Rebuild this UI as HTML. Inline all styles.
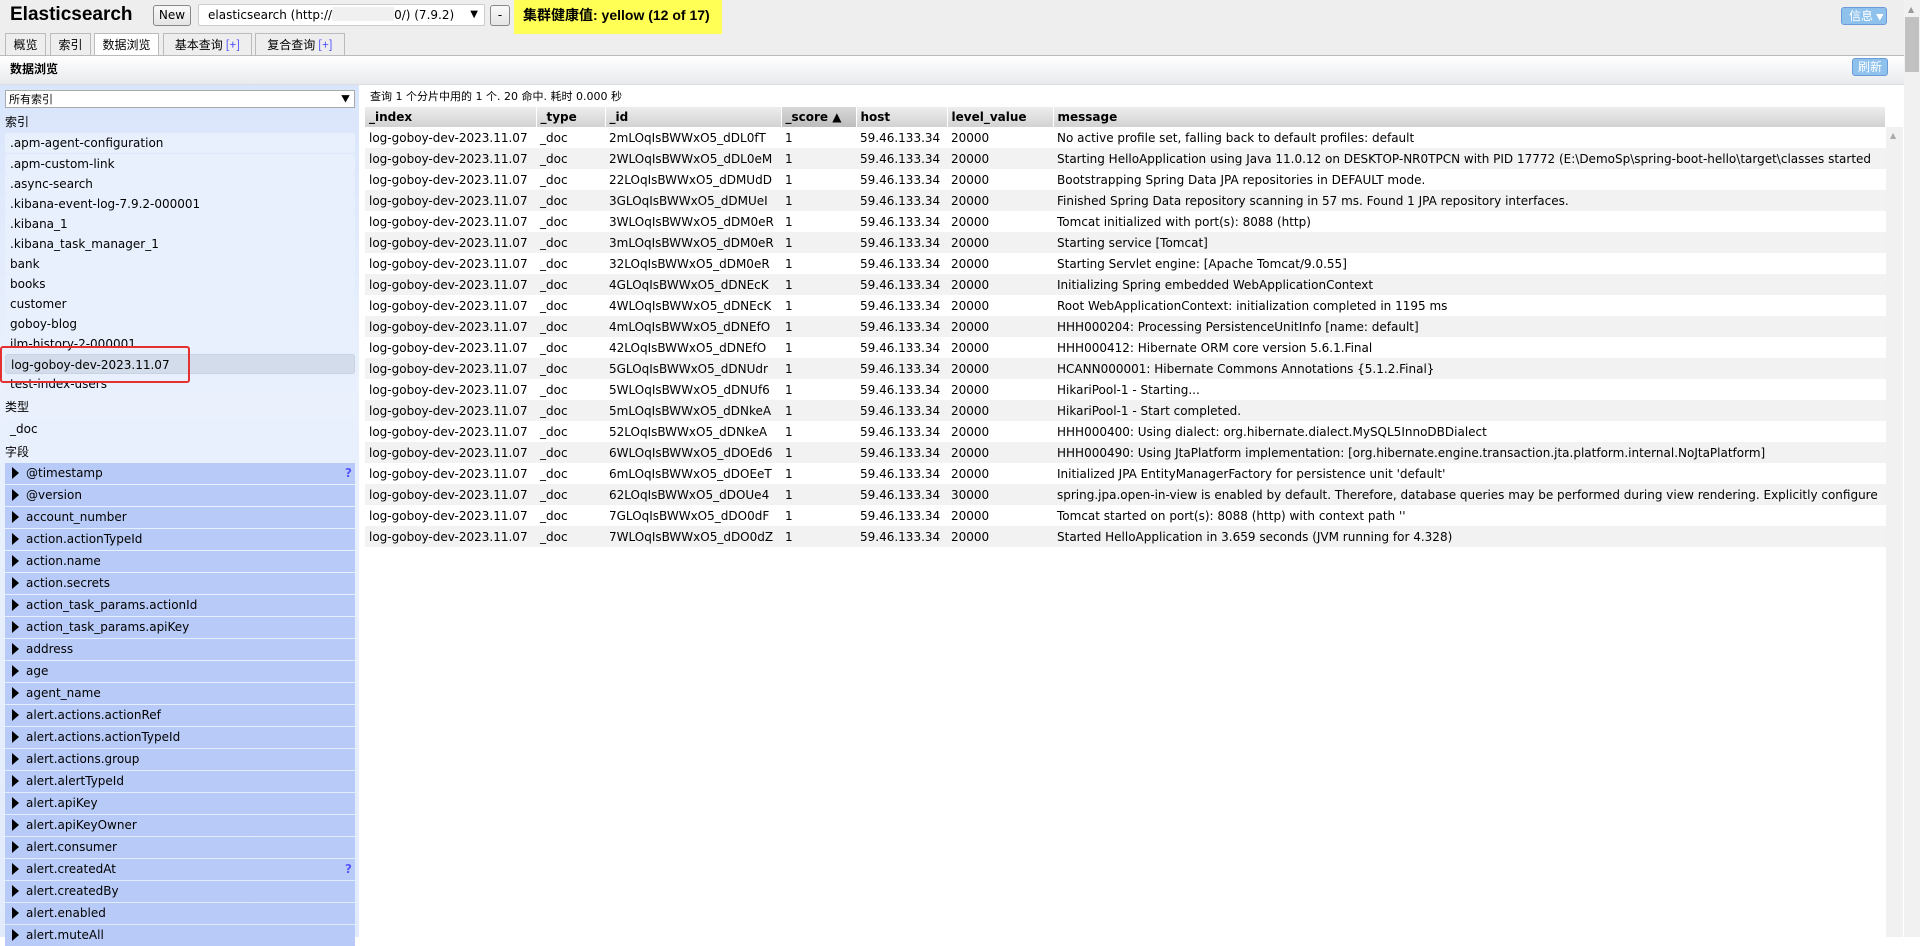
<!DOCTYPE html>
<html><head><meta charset="utf-8"><style>
*{box-sizing:border-box;margin:0;padding:0}
body{width:1920px;height:937px;overflow:hidden;background:#fff;font-family:"DejaVu Sans","Noto Sans CJK SC",sans-serif;font-size:12px;color:#000;position:relative}
.abs{position:absolute}
#hdr{left:0;top:0;width:1904px;height:55px;background:#eee}
.btn{position:absolute;border:1px solid #888;border-radius:3px;background:linear-gradient(#fafafa,#e4e4e4);font-size:12px;text-align:center;line-height:19px}
.tab{position:absolute;top:33px;height:22px;border:1px solid #bbb;border-bottom:none;background:#eee;font-family:"Noto Sans CJK SC",sans-serif;font-size:12px;text-align:center;line-height:21px}
.tab b{font-weight:normal;color:#44f}
#bar{left:0;top:55px;width:1904px;height:30px;border-top:1px solid #bbb;border-bottom:1px solid #ddd;background:linear-gradient(#fff,#e8eaed)}
#left{left:0;top:85px;width:359px;height:852px;background:linear-gradient(#d9e5fb,#eaf1fd 300px,#e2ebfc)}
.lbl{position:absolute;left:5px;font-family:"Noto Sans CJK SC",sans-serif;font-size:12px}
.it{position:absolute;left:5px;width:350px;height:20px;background:#e9f0fd;border-radius:3px;padding-left:5px;line-height:20px;font-size:12px}
.fd{position:absolute;left:5px;width:350px;height:21px;background:#b8cbf8;padding-left:7px;line-height:21px;font-size:12px}
.fd i{display:inline-block;width:0;height:0;border-top:6px solid transparent;border-bottom:6px solid transparent;border-left:7px solid #000;vertical-align:-2px;margin-right:7px}
.fd q{position:absolute;right:3px;color:#55f;font-weight:bold;quotes:none}
table{position:absolute;left:365px;top:107px;border-collapse:collapse;width:1521px;table-layout:fixed}
th{height:20px;text-align:left;font-weight:bold;padding-left:4px;background:linear-gradient(#ededed,#d2d2d2);border-right:1px solid #fff;font-size:12px;white-space:nowrap;overflow:hidden}
td{height:21px;padding-left:4px;white-space:nowrap;overflow:hidden;font-size:12px}
tr:nth-child(odd) td{background:#f2f2f2}
</style></head><body>
<div id="hdr" class="abs"></div>
<div class="abs" style="left:10px;top:4px;font:bold 19px 'Liberation Sans',sans-serif">Elasticsearch</div>
<div class="btn" style="left:153px;top:5px;width:38px;height:21px">New</div>
<div class="abs" style="left:198px;top:4px;width:287px;height:22px;background:#fff;border:1px solid #ccc;border-radius:2px;line-height:20px;padding-left:9px;font-size:12px">elasticsearch (http://<span style="display:inline-block;width:62px;height:14px;background:#f0f0f0;vertical-align:-2px"></span>0/) (7.9.2)<span style="position:absolute;right:6px;font-size:10px">&#9660;</span></div>
<div class="btn" style="left:490px;top:5px;width:20px;height:21px">-</div>
<div class="abs" style="left:514px;top:0;width:208px;height:34px;background:#ff5;font:bold 14px 'Liberation Sans','Noto Sans CJK SC',sans-serif;line-height:30px;padding-left:9px">集群健康值: yellow (12 of 17)</div>
<div class="abs" style="left:1841px;top:7px;width:46px;height:18px;background:#8ec2ec;border:1px solid #6b9bd8;border-radius:3px;color:#fff;font-size:12px;line-height:16px;padding-left:7px;font-family:'Noto Sans CJK SC',sans-serif">信息 <span style="font-size:8px">&#9660;</span></div>
<div class="tab" style="left:5px;width:41px">概览</div>
<div class="tab" style="left:50px;width:41px">索引</div>
<div class="tab" style="left:94px;width:65px;background:#fff;height:23px">数据浏览</div>
<div class="tab" style="left:163px;width:89px">基本查询 <b>[+]</b></div>
<div class="tab" style="left:255px;width:90px">复合查询 <b>[+]</b></div>
<div id="bar" class="abs"></div>
<div class="abs" style="left:10px;top:60px;font:bold 12px 'Noto Sans CJK SC',sans-serif">数据浏览</div>
<div class="abs" style="left:1852px;top:58px;width:36px;height:18px;background:#8ec2ec;border:1px solid #6b9bd8;border-radius:3px;color:#fff;font-size:12px;line-height:16px;text-align:center;font-family:'Noto Sans CJK SC',sans-serif">刷新</div>
<div id="left" class="abs"></div>
<div class="abs" style="left:5px;top:90px;width:350px;height:18px;background:#fff;border:1px solid #aaa;font-family:'Noto Sans CJK SC',sans-serif;font-size:11px;line-height:16px;padding-left:3px">所有索引<span style="position:absolute;right:4px;font-size:9px">&#9660;</span></div>
<div class="lbl" style="top:113px">索引</div>
<div class="it" style="top:133px">.apm-agent-configuration</div>
<div class="it" style="top:154px">.apm-custom-link</div>
<div class="it" style="top:174px">.async-search</div>
<div class="it" style="top:194px">.kibana-event-log-7.9.2-000001</div>
<div class="it" style="top:214px">.kibana_1</div>
<div class="it" style="top:234px">.kibana_task_manager_1</div>
<div class="it" style="top:254px">bank</div>
<div class="it" style="top:274px">books</div>
<div class="it" style="top:294px">customer</div>
<div class="it" style="top:314px">goboy-blog</div>
<div class="it" style="top:334px">ilm-history-2-000001</div>
<div class="it" style="top:354px;background:#d3dcea;border:1px solid #c8d2e0">log-goboy-dev-2023.11.07</div>
<div class="it" style="top:374px">test-index-users</div>
<div class="abs" style="left:0;top:346px;width:190px;height:37px;border:2px solid #e53030;border-radius:3px"></div>
<div class="lbl" style="top:398px">类型</div>
<div class="it" style="top:419px">_doc</div>
<div class="lbl" style="top:443px">字段</div>
<div class="fd" style="top:463px"><i></i>@timestamp<q>?</q></div>
<div class="fd" style="top:485px"><i></i>@version</div>
<div class="fd" style="top:507px"><i></i>account_number</div>
<div class="fd" style="top:529px"><i></i>action.actionTypeId</div>
<div class="fd" style="top:551px"><i></i>action.name</div>
<div class="fd" style="top:573px"><i></i>action.secrets</div>
<div class="fd" style="top:595px"><i></i>action_task_params.actionId</div>
<div class="fd" style="top:617px"><i></i>action_task_params.apiKey</div>
<div class="fd" style="top:639px"><i></i>address</div>
<div class="fd" style="top:661px"><i></i>age</div>
<div class="fd" style="top:683px"><i></i>agent_name</div>
<div class="fd" style="top:705px"><i></i>alert.actions.actionRef</div>
<div class="fd" style="top:727px"><i></i>alert.actions.actionTypeId</div>
<div class="fd" style="top:749px"><i></i>alert.actions.group</div>
<div class="fd" style="top:771px"><i></i>alert.alertTypeId</div>
<div class="fd" style="top:793px"><i></i>alert.apiKey</div>
<div class="fd" style="top:815px"><i></i>alert.apiKeyOwner</div>
<div class="fd" style="top:837px"><i></i>alert.consumer</div>
<div class="fd" style="top:859px"><i></i>alert.createdAt<q>?</q></div>
<div class="fd" style="top:881px"><i></i>alert.createdBy</div>
<div class="fd" style="top:903px"><i></i>alert.enabled</div>
<div class="fd" style="top:925px"><i></i>alert.muteAll</div>
<div class="abs" style="left:370px;top:88px;font-family:'DejaVu Sans','Noto Sans CJK SC',sans-serif;font-size:11px">查询 1 个分片中用的 1 个. 20 命中. 耗时 0.000 秒</div>
<table>
<colgroup><col style="width:171px"><col style="width:69px"><col style="width:176px"><col style="width:75px"><col style="width:91px"><col style="width:106px"><col></colgroup>
<tr><th>_index</th><th>_type</th><th>_id</th><th style="background:linear-gradient(#d8d8d8,#bdbdbd)">_score &#9650;</th><th>host</th><th>level_value</th><th>message</th></tr>
<tr><td>log-goboy-dev-2023.11.07</td><td>_doc</td><td>2mLOqIsBWWxO5_dDL0fT</td><td>1</td><td>59.46.133.34</td><td>20000</td><td>No active profile set, falling back to default profiles: default</td></tr>
<tr><td>log-goboy-dev-2023.11.07</td><td>_doc</td><td>2WLOqIsBWWxO5_dDL0eM</td><td>1</td><td>59.46.133.34</td><td>20000</td><td>Starting HelloApplication using Java 11.0.12 on DESKTOP-NR0TPCN with PID 17772 (E:\DemoSp\spring-boot-hello\target\classes started</td></tr>
<tr><td>log-goboy-dev-2023.11.07</td><td>_doc</td><td>22LOqIsBWWxO5_dDMUdD</td><td>1</td><td>59.46.133.34</td><td>20000</td><td>Bootstrapping Spring Data JPA repositories in DEFAULT mode.</td></tr>
<tr><td>log-goboy-dev-2023.11.07</td><td>_doc</td><td>3GLOqIsBWWxO5_dDMUeI</td><td>1</td><td>59.46.133.34</td><td>20000</td><td>Finished Spring Data repository scanning in 57 ms. Found 1 JPA repository interfaces.</td></tr>
<tr><td>log-goboy-dev-2023.11.07</td><td>_doc</td><td>3WLOqIsBWWxO5_dDM0eR</td><td>1</td><td>59.46.133.34</td><td>20000</td><td>Tomcat initialized with port(s): 8088 (http)</td></tr>
<tr><td>log-goboy-dev-2023.11.07</td><td>_doc</td><td>3mLOqIsBWWxO5_dDM0eR</td><td>1</td><td>59.46.133.34</td><td>20000</td><td>Starting service [Tomcat]</td></tr>
<tr><td>log-goboy-dev-2023.11.07</td><td>_doc</td><td>32LOqIsBWWxO5_dDM0eR</td><td>1</td><td>59.46.133.34</td><td>20000</td><td>Starting Servlet engine: [Apache Tomcat/9.0.55]</td></tr>
<tr><td>log-goboy-dev-2023.11.07</td><td>_doc</td><td>4GLOqIsBWWxO5_dDNEcK</td><td>1</td><td>59.46.133.34</td><td>20000</td><td>Initializing Spring embedded WebApplicationContext</td></tr>
<tr><td>log-goboy-dev-2023.11.07</td><td>_doc</td><td>4WLOqIsBWWxO5_dDNEcK</td><td>1</td><td>59.46.133.34</td><td>20000</td><td>Root WebApplicationContext: initialization completed in 1195 ms</td></tr>
<tr><td>log-goboy-dev-2023.11.07</td><td>_doc</td><td>4mLOqIsBWWxO5_dDNEfO</td><td>1</td><td>59.46.133.34</td><td>20000</td><td>HHH000204: Processing PersistenceUnitInfo [name: default]</td></tr>
<tr><td>log-goboy-dev-2023.11.07</td><td>_doc</td><td>42LOqIsBWWxO5_dDNEfO</td><td>1</td><td>59.46.133.34</td><td>20000</td><td>HHH000412: Hibernate ORM core version 5.6.1.Final</td></tr>
<tr><td>log-goboy-dev-2023.11.07</td><td>_doc</td><td>5GLOqIsBWWxO5_dDNUdr</td><td>1</td><td>59.46.133.34</td><td>20000</td><td>HCANN000001: Hibernate Commons Annotations {5.1.2.Final}</td></tr>
<tr><td>log-goboy-dev-2023.11.07</td><td>_doc</td><td>5WLOqIsBWWxO5_dDNUf6</td><td>1</td><td>59.46.133.34</td><td>20000</td><td>HikariPool-1 - Starting...</td></tr>
<tr><td>log-goboy-dev-2023.11.07</td><td>_doc</td><td>5mLOqIsBWWxO5_dDNkeA</td><td>1</td><td>59.46.133.34</td><td>20000</td><td>HikariPool-1 - Start completed.</td></tr>
<tr><td>log-goboy-dev-2023.11.07</td><td>_doc</td><td>52LOqIsBWWxO5_dDNkeA</td><td>1</td><td>59.46.133.34</td><td>20000</td><td>HHH000400: Using dialect: org.hibernate.dialect.MySQL5InnoDBDialect</td></tr>
<tr><td>log-goboy-dev-2023.11.07</td><td>_doc</td><td>6WLOqIsBWWxO5_dDOEd6</td><td>1</td><td>59.46.133.34</td><td>20000</td><td>HHH000490: Using JtaPlatform implementation: [org.hibernate.engine.transaction.jta.platform.internal.NoJtaPlatform]</td></tr>
<tr><td>log-goboy-dev-2023.11.07</td><td>_doc</td><td>6mLOqIsBWWxO5_dDOEeT</td><td>1</td><td>59.46.133.34</td><td>20000</td><td>Initialized JPA EntityManagerFactory for persistence unit 'default'</td></tr>
<tr><td>log-goboy-dev-2023.11.07</td><td>_doc</td><td>62LOqIsBWWxO5_dDOUe4</td><td>1</td><td>59.46.133.34</td><td>30000</td><td>spring.jpa.open-in-view is enabled by default. Therefore, database queries may be performed during view rendering. Explicitly configure</td></tr>
<tr><td>log-goboy-dev-2023.11.07</td><td>_doc</td><td>7GLOqIsBWWxO5_dDO0dF</td><td>1</td><td>59.46.133.34</td><td>20000</td><td>Tomcat started on port(s): 8088 (http) with context path ''</td></tr>
<tr><td>log-goboy-dev-2023.11.07</td><td>_doc</td><td>7WLOqIsBWWxO5_dDO0dZ</td><td>1</td><td>59.46.133.34</td><td>20000</td><td>Started HelloApplication in 3.659 seconds (JVM running for 4.328)</td></tr>
</table>
<div class="abs" style="left:1886px;top:127px;width:17px;height:810px;background:#f1f1f1"></div>
<div class="abs" style="left:1890px;top:131px;color:#aaa;font-size:8px">&#9650;</div>
<div class="abs" style="left:1904px;top:0;width:16px;height:937px;background:#f1f1f1"></div>
<div class="abs" style="left:1908px;top:5px;color:#999;font-size:8px">&#9650;</div>
<div class="abs" style="left:1905px;top:17px;width:14px;height:55px;background:#c1c1c1"></div>
</body></html>
